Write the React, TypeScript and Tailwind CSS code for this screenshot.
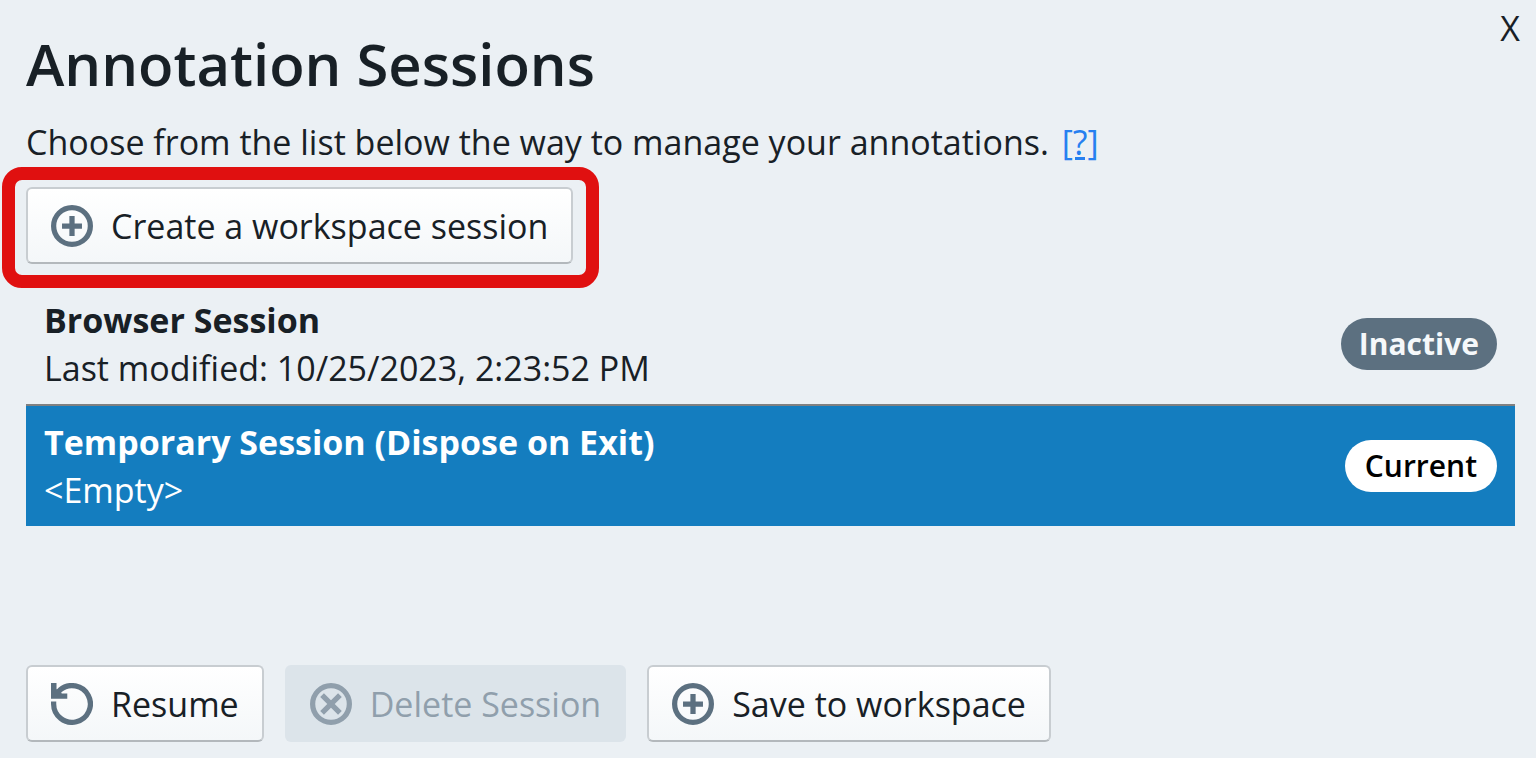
import { ReactNode } from 'react';
import { clsx } from 'clsx';

interface Session {
  name: string;
  detail: string;
  status: 'Inactive' | 'Current';
}

const sessions: Session[] = [
  {
    name: 'Browser Session',
    detail: 'Last modified: 10/25/2023, 2:23:52 PM',
    status: 'Inactive',
  },
  {
    name: 'Temporary Session (Dispose on Exit)',
    detail: '<Empty>',
    status: 'Current',
  },
];

function AddIcon() {
  return (
    <svg viewBox="0 0 16 16" className="size-[42px] shrink-0" fill="none" stroke="currentColor" strokeWidth="2" aria-hidden="true">
      <circle cx="8" cy="8" r="7" />
      <path d="M8 4.2v7.6M4.2 8h7.6" />
    </svg>
  );
}

function ResetIcon() {
  return (
    <svg viewBox="0 0 16 16" className="size-[42px] shrink-0" fill="none" stroke="currentColor" strokeWidth="2" aria-hidden="true">
      <path d="M1 7v1a7 7 0 1 0 2.4-5.3L2.4 3.7" />
      <path d="M0 0h2.1v2.4l1.2.2.8 1.4h2.1v2H0z" fill="currentColor" stroke="none" />
    </svg>
  );
}

function DeleteIcon() {
  return (
    <svg viewBox="0 0 16 16" className="size-[42px] shrink-0" fill="none" stroke="currentColor" strokeWidth="2" aria-hidden="true">
      <circle cx="8" cy="8" r="7" />
      <path d="M4.6 4.6l6.8 6.8M11.4 4.6l-6.8 6.8" />
    </svg>
  );
}

interface ActionButtonProps {
  icon: ReactNode;
  children: ReactNode;
  disabled?: boolean;
}

function ActionButton({ icon, children, disabled }: ActionButtonProps) {
  return (
    <button
      type="button"
      disabled={disabled}
      className={clsx(
        'flex h-[77px] items-center gap-[18px] rounded-md border-2 px-[23px] whitespace-nowrap',
        disabled
          ? 'border-transparent bg-[#dce4ea] text-[#909fac]'
          : 'border-[#c8cdd1] border-b-[#b3b8bc] bg-linear-to-b from-white to-[#f4f7f9]'
      )}
    >
      <span className={disabled ? 'text-[#909fac]' : 'text-[#5c7080]'}>{icon}</span>
      {children}
    </button>
  );
}

function SessionRow({ session }: { session: Session }) {
  const current = session.status === 'Current';

  return (
    <li
      className={clsx(
        'flex items-center justify-between border-t-2 px-[18px] py-3',
        current ? 'border-[#808080] bg-[#147dbf] text-white' : 'border-transparent'
      )}
    >
      <div className="leading-[48px]">
        <p className="font-bold">{session.name}</p>
        <p>{session.detail}</p>
      </div>
      <span
        className={clsx(
          'flex h-[52px] items-center rounded-full text-[30px]',
          current
            ? 'bg-white px-5 font-semibold text-black'
            : 'bg-[#5c7080] px-[18px] font-bold text-[#f5f8fa]'
        )}
      >
        {session.status}
      </span>
    </li>
  );
}

export default function App() {
  return (
    <main className="relative flex min-h-screen flex-col bg-[#ebf0f4] px-[26px] pt-7 pb-4 font-['Open_Sans','Noto_Sans',sans-serif] text-[34px] leading-[48px] text-[#182026]">
      <button type="button" aria-label="Close" className="absolute top-1 right-4">
        X
      </button>

      <h1 className="text-[58px] leading-[72px] font-semibold">Annotation Sessions</h1>
      <p className="mt-[18px]">
        Choose from the list below the way to manage your annotations.{' '}
        <a href="#help" className="ml-1 text-[#2680f0] underline">
          [?]
        </a>
      </p>

      {/* Primary action with its callout frame */}
      <div className="relative mt-[21px] self-start">
        <ActionButton icon={<AddIcon />}>Create a workspace session</ActionButton>
        <div className="pointer-events-none absolute -top-5 -right-[26px] -bottom-6 -left-6 rounded-[20px] border-[13px] border-[#e01010]" />
      </div>

      <ul className="mt-[18px] -mr-[5px]">
        {sessions.map((session) => (
          <SessionRow key={session.name} session={session} />
        ))}
      </ul>

      {/* Footer actions */}
      <div className="mt-auto flex gap-[21px]">
        <ActionButton icon={<ResetIcon />}>Resume</ActionButton>
        <ActionButton icon={<DeleteIcon />} disabled>
          Delete Session
        </ActionButton>
        <ActionButton icon={<AddIcon />}>Save to workspace</ActionButton>
      </div>
    </main>
  );
}
